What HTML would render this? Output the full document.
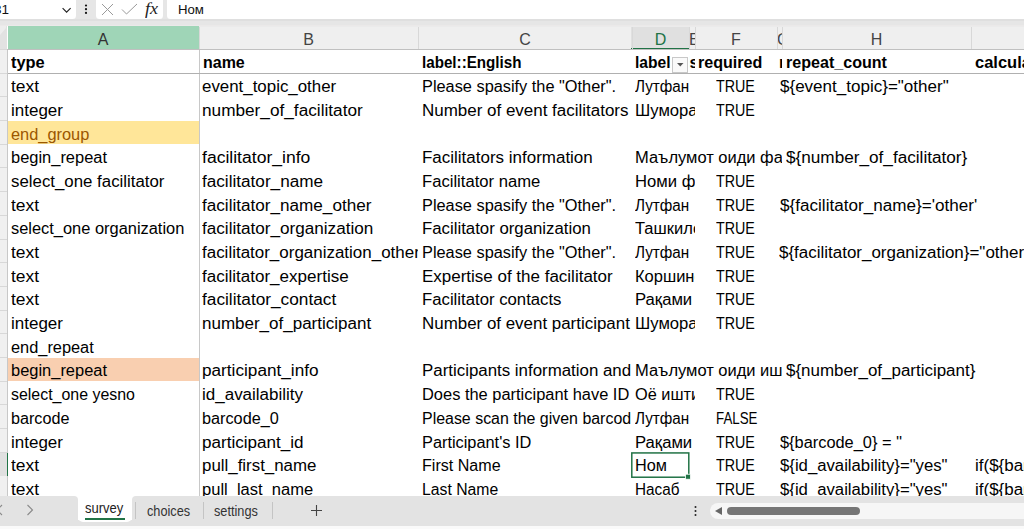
<!DOCTYPE html>
<html><head><meta charset="utf-8"><style>
*{margin:0;padding:0;box-sizing:border-box}
html,body{width:1024px;height:529px;overflow:hidden;background:#fff;position:relative;font-family:"Liberation Sans",sans-serif}
.a{position:absolute}
.t{position:absolute;white-space:pre;font-size:16px;line-height:20px;color:#000;transform-origin:0 0}
.clip{position:absolute;overflow:hidden}
</style></head><body>

<div class="a" style="left:0;top:0;width:1024px;height:26px;background:#e6e6e6"></div>
<div class="a" style="left:-10px;top:-6px;width:86px;height:25px;background:#fff;border-radius:3.5px"></div>
<div class="a" style="left:96px;top:-6px;width:67px;height:25px;background:#fff;border-radius:3.5px"></div>
<div class="a" style="left:167px;top:-6px;width:870px;height:25px;background:#fff;border-radius:3.5px"></div>
<div class="a" style="left:0;top:19px;width:1024px;height:2px;background:#dfdfdf"></div>
<div class="a" style="left:0;top:25px;width:1024px;height:1px;background:#ebe9e9"></div>
<div class="t" style="left:-6px;top:1px;font-size:13.5px;line-height:17px;color:#111">31</div>
<svg class="a" style="left:61px;top:6px" width="12" height="8" viewBox="0 0 12 8"><path d="M1.6 2.1 L5.6 6.1 L9.6 2.1" fill="none" stroke="#222" stroke-width="1.15"/></svg>
<svg class="a" style="left:83px;top:3px" width="6" height="13" viewBox="0 0 6 13"><circle cx="3" cy="2.5" r="1.1" fill="#111"/><circle cx="3" cy="6.2" r="1.1" fill="#111"/><circle cx="3" cy="9.9" r="1.1" fill="#111"/></svg>
<svg class="a" style="left:101px;top:3px" width="13" height="13" viewBox="0 0 13 13"><path d="M1 1 L12 12 M12 1 L1 12" stroke="#9a9a9a" stroke-width="1"/></svg>
<svg class="a" style="left:121px;top:3px" width="17" height="12" viewBox="0 0 17 12"><path d="M1 6.5 L5.5 11 L16 1" fill="none" stroke="#9a9a9a" stroke-width="1"/></svg>
<div class="t" style="left:145px;top:0px;font-family:'Liberation Serif',serif;font-style:italic;font-size:16.5px;line-height:18px;color:#222;transform:scaleX(1.1)">fx</div>
<div class="t" style="left:178px;top:2px;font-size:12px;line-height:17px;color:#111;transform:scaleX(1.1)">Ном</div>
<div class="a" style="left:0;top:26px;width:1024px;height:23px;background:#efefef"></div>
<div class="a" style="left:0;top:26px;width:1024px;height:1px;background:#ebebeb"></div>
<div class="a" style="left:0;top:49px;width:1024px;height:1px;background:#c0c0c0"></div>
<div class="a" style="left:0;top:26px;width:7px;height:23px;background:#e2e2e2"></div>
<svg class="a" style="left:0;top:26px" width="7" height="23"><path d="M0 0 L6 0 L6 2 L0 9 Z" fill="#ededed"/></svg>
<div class="a" style="left:7px;top:26px;width:1px;height:23px;background:#fff"></div>
<div class="a" style="left:8px;top:26px;width:191px;height:23px;background:#9fd5b7"></div>
<div class="a" style="left:631px;top:27px;width:58px;height:22px;background:#e0e0e0"></div>
<div class="a" style="left:631px;top:47.5px;width:58px;height:1.5px;background:#217346"></div>
<div class="a" style="left:199px;top:27px;width:1px;height:22px;background:#d8d8d8"></div>
<div class="a" style="left:418px;top:27px;width:1px;height:22px;background:#d8d8d8"></div>
<div class="a" style="left:632px;top:27px;width:1px;height:22px;background:#d8d8d8"></div>
<div class="a" style="left:689px;top:27px;width:1px;height:22px;background:#d8d8d8"></div>
<div class="a" style="left:695px;top:27px;width:1px;height:22px;background:#d8d8d8"></div>
<div class="a" style="left:777px;top:27px;width:1px;height:22px;background:#d8d8d8"></div>
<div class="a" style="left:782px;top:27px;width:1px;height:22px;background:#d8d8d8"></div>
<div class="a" style="left:971px;top:27px;width:1px;height:22px;background:#d8d8d8"></div>
<div class="clip" style="left:8px;top:26px;width:191px;height:23px"><div class="t" style="left:65.0px;width:60px;text-align:center;top:3.7px;font-size:16px;line-height:20px;color:#333">A</div></div>
<div class="clip" style="left:200px;top:26px;width:218px;height:23px"><div class="t" style="left:78.5px;width:60px;text-align:center;top:3.7px;font-size:16px;line-height:20px;color:#444">B</div></div>
<div class="clip" style="left:419px;top:26px;width:213px;height:23px"><div class="t" style="left:76.0px;width:60px;text-align:center;top:3.7px;font-size:16px;line-height:20px;color:#444">C</div></div>
<div class="clip" style="left:633px;top:26px;width:56px;height:23px"><div class="t" style="left:-2.5px;width:60px;text-align:center;top:3.7px;font-size:16px;line-height:20px;color:#217346">D</div></div>
<div class="clip" style="left:690px;top:26px;width:5px;height:23px"><div class="t" style="left:-1px;top:3.7px;font-size:16px;line-height:20px;color:#444">E</div></div>
<div class="clip" style="left:696px;top:26px;width:81px;height:23px"><div class="t" style="left:10.0px;width:60px;text-align:center;top:3.7px;font-size:16px;line-height:20px;color:#444">F</div></div>
<div class="clip" style="left:778px;top:26px;width:4px;height:23px"><div class="t" style="left:-1px;top:3.7px;font-size:16px;line-height:20px;color:#444">G</div></div>
<div class="clip" style="left:783px;top:26px;width:188px;height:23px"><div class="t" style="left:63.5px;width:60px;text-align:center;top:3.7px;font-size:16px;line-height:20px;color:#444">H</div></div>
<div class="clip" style="left:972px;top:26px;width:199px;height:23px"><div class="t" style="left:69.0px;width:60px;text-align:center;top:3.7px;font-size:16px;line-height:20px;color:#444">I</div></div>
<div class="a" style="left:0;top:50px;width:7px;height:446px;background:#f0f0f0"></div>
<div class="a" style="left:7px;top:50px;width:1px;height:446px;background:#c8c8c8"></div>
<div class="a" style="left:0;top:49.00px;width:7px;height:1px;background:#d8d8d8"></div>
<div class="a" style="left:0;top:72.69px;width:7px;height:1px;background:#d8d8d8"></div>
<div class="a" style="left:0;top:96.38px;width:7px;height:1px;background:#d8d8d8"></div>
<div class="a" style="left:0;top:120.07px;width:7px;height:1px;background:#d8d8d8"></div>
<div class="a" style="left:0;top:143.76px;width:7px;height:1px;background:#d8d8d8"></div>
<div class="a" style="left:0;top:167.45px;width:7px;height:1px;background:#d8d8d8"></div>
<div class="a" style="left:0;top:191.14px;width:7px;height:1px;background:#d8d8d8"></div>
<div class="a" style="left:0;top:214.83px;width:7px;height:1px;background:#d8d8d8"></div>
<div class="a" style="left:0;top:238.52px;width:7px;height:1px;background:#d8d8d8"></div>
<div class="a" style="left:0;top:262.21px;width:7px;height:1px;background:#d8d8d8"></div>
<div class="a" style="left:0;top:285.90px;width:7px;height:1px;background:#d8d8d8"></div>
<div class="a" style="left:0;top:309.59px;width:7px;height:1px;background:#d8d8d8"></div>
<div class="a" style="left:0;top:333.28px;width:7px;height:1px;background:#d8d8d8"></div>
<div class="a" style="left:0;top:356.97px;width:7px;height:1px;background:#d8d8d8"></div>
<div class="a" style="left:0;top:380.66px;width:7px;height:1px;background:#d8d8d8"></div>
<div class="a" style="left:0;top:404.35px;width:7px;height:1px;background:#d8d8d8"></div>
<div class="a" style="left:0;top:428.04px;width:7px;height:1px;background:#d8d8d8"></div>
<div class="a" style="left:0;top:451.73px;width:7px;height:1px;background:#d8d8d8"></div>
<div class="a" style="left:0;top:475.42px;width:7px;height:1px;background:#d8d8d8"></div>
<div class="a" style="left:0;top:499.11px;width:7px;height:1px;background:#d8d8d8"></div>
<div class="a" style="left:0;top:452.73px;width:7px;height:23.69px;background:#e0e0e0"></div>
<div class="a" style="left:7px;top:452.73px;width:1px;height:23.69px;background:#217346"></div>
<div class="a" style="left:8px;top:121.07px;width:191px;height:22.89px;background:#ffe699"></div>
<div class="a" style="left:8px;top:357.97px;width:191px;height:23.09px;background:#f9cfb0"></div>
<div class="a" style="left:199px;top:50px;width:1px;height:446px;background:#c8c8c8"></div>
<div class="a" style="left:8px;top:73px;width:1016px;height:1px;background:#b0b0b0"></div>
<div class="clip" style="left:8px;top:50.00px;width:191px;height:25.69px"><div class="t" style="left:2.70px;top:2.50px;font-weight:bold;color:#000;transform:scaleX(1.0243)">type</div></div>
<div class="clip" style="left:200px;top:50.00px;width:218px;height:25.69px"><div class="t" style="left:2.50px;top:2.50px;font-weight:bold;color:#000;transform:scaleX(0.9988)">name</div></div>
<div class="clip" style="left:418px;top:50.00px;width:214px;height:25.69px"><div class="t" style="left:3.50px;top:2.50px;font-weight:bold;color:#000;transform:scaleX(0.9485)">label::English</div></div>
<div class="clip" style="left:632px;top:50.00px;width:40px;height:25.69px"><div class="t" style="left:2.80px;top:2.50px;font-weight:bold;color:#000;transform:scaleX(0.9753)">label</div></div>
<div class="clip" style="left:695px;top:50.00px;width:82px;height:25.69px"><div class="t" style="left:2.80px;top:2.50px;font-weight:bold;color:#000;transform:scaleX(1.0047)">required</div></div>
<div class="clip" style="left:689px;top:50.00px;width:6px;height:25.69px"><div class="t" style="left:-37.00px;top:2.50px;font-weight:bold;color:#000;transform:scaleX(1.0300)">labels</div></div>
<div class="clip" style="left:777px;top:50.00px;width:5px;height:25.69px"><div class="t" style="left:2.00px;top:2.50px;font-weight:bold;color:#000;transform:scaleX(1.0300)">relevant</div></div>
<div class="clip" style="left:782px;top:50.00px;width:189px;height:25.69px"><div class="t" style="left:3.90px;top:2.50px;font-weight:bold;color:#000;transform:scaleX(1.0050)">repeat_count</div></div>
<div class="clip" style="left:971px;top:50.00px;width:53px;height:25.69px"><div class="t" style="left:4.00px;top:2.50px;font-weight:bold;color:#000;transform:scaleX(1.0300)">calcula</div></div>
<div class="clip" style="left:8px;top:73.69px;width:191px;height:25.69px"><div class="t" style="left:3.10px;top:3.50px;color:#000;transform:scaleX(1.0891)">text</div></div>
<div class="clip" style="left:200px;top:73.69px;width:218px;height:25.69px"><div class="t" style="left:2.40px;top:3.50px;color:#000;transform:scaleX(1.0550)">event_topic_other</div></div>
<div class="clip" style="left:418px;top:73.69px;width:214px;height:25.69px"><div class="t" style="left:3.90px;top:3.50px;color:#000;transform:scaleX(1.0205)">Please spasify the &quot;Other&quot;.</div></div>
<div class="clip" style="left:632px;top:73.69px;width:63px;height:25.69px"><div class="t" style="left:2.50px;top:3.50px;color:#000;transform:scaleX(0.9534)">Лутфан</div></div>
<div class="clip" style="left:695px;top:73.69px;width:82px;height:25.69px"><div class="t" style="left:21.10px;top:3.50px;color:#000;transform:scaleX(0.8922)">TRUE</div></div>
<div class="clip" style="left:777px;top:73.69px;width:247px;height:25.69px"><div class="t" style="left:2.70px;top:3.50px;color:#000;transform:scaleX(1.0637)">${event_topic}=&quot;other&quot;</div></div>
<div class="clip" style="left:8px;top:97.38px;width:191px;height:25.69px"><div class="t" style="left:3.10px;top:3.50px;color:#000;transform:scaleX(1.0613)">integer</div></div>
<div class="clip" style="left:200px;top:97.38px;width:218px;height:25.69px"><div class="t" style="left:2.40px;top:3.50px;color:#000;transform:scaleX(1.0756)">number_of_facilitator</div></div>
<div class="clip" style="left:418px;top:97.38px;width:214px;height:25.69px"><div class="t" style="left:3.90px;top:3.50px;color:#000;transform:scaleX(1.0601)">Number of event facilitators</div></div>
<div class="clip" style="left:632px;top:97.38px;width:63px;height:25.69px"><div class="t" style="left:3.40px;top:3.50px;color:#000;transform:scaleX(1.0400)">Шумора</div></div>
<div class="clip" style="left:695px;top:97.38px;width:82px;height:25.69px"><div class="t" style="left:21.10px;top:3.50px;color:#000;transform:scaleX(0.8922)">TRUE</div></div>
<div class="clip" style="left:8px;top:121.07px;width:191px;height:25.69px"><div class="t" style="left:3.10px;top:3.50px;color:#9c5700;transform:scaleX(1.0235)">end_group</div></div>
<div class="clip" style="left:8px;top:144.76px;width:191px;height:25.69px"><div class="t" style="left:3.10px;top:3.50px;color:#000;transform:scaleX(1.0278)">begin_repeat</div></div>
<div class="clip" style="left:200px;top:144.76px;width:218px;height:25.69px"><div class="t" style="left:2.40px;top:3.50px;color:#000;transform:scaleX(1.0973)">facilitator_info</div></div>
<div class="clip" style="left:418px;top:144.76px;width:214px;height:25.69px"><div class="t" style="left:3.90px;top:3.50px;color:#000;transform:scaleX(1.0609)">Facilitators information</div></div>
<div class="clip" style="left:632px;top:144.76px;width:150px;height:25.69px"><div class="t" style="left:3.40px;top:3.50px;color:#000;transform:scaleX(1.0300)">Маълумот оиди фасилитатор</div></div>
<div class="clip" style="left:782px;top:144.76px;width:242px;height:25.69px"><div class="t" style="left:3.70px;top:3.50px;color:#000;transform:scaleX(1.0728)">${number_of_facilitator}</div></div>
<div class="clip" style="left:8px;top:168.45px;width:191px;height:25.69px"><div class="t" style="left:3.10px;top:3.50px;color:#000;transform:scaleX(1.0521)">select_one facilitator</div></div>
<div class="clip" style="left:200px;top:168.45px;width:218px;height:25.69px"><div class="t" style="left:2.40px;top:3.50px;color:#000;transform:scaleX(1.0717)">facilitator_name</div></div>
<div class="clip" style="left:418px;top:168.45px;width:214px;height:25.69px"><div class="t" style="left:3.90px;top:3.50px;color:#000;transform:scaleX(1.0395)">Facilitator name</div></div>
<div class="clip" style="left:632px;top:168.45px;width:63px;height:25.69px"><div class="t" style="left:3.40px;top:3.50px;color:#000;transform:scaleX(1.0400)">Номи фасилитатор</div></div>
<div class="clip" style="left:695px;top:168.45px;width:82px;height:25.69px"><div class="t" style="left:21.10px;top:3.50px;color:#000;transform:scaleX(0.8922)">TRUE</div></div>
<div class="clip" style="left:8px;top:192.14px;width:191px;height:25.69px"><div class="t" style="left:3.10px;top:3.50px;color:#000;transform:scaleX(1.0891)">text</div></div>
<div class="clip" style="left:200px;top:192.14px;width:218px;height:25.69px"><div class="t" style="left:2.40px;top:3.50px;color:#000;transform:scaleX(1.0701)">facilitator_name_other</div></div>
<div class="clip" style="left:418px;top:192.14px;width:214px;height:25.69px"><div class="t" style="left:3.90px;top:3.50px;color:#000;transform:scaleX(1.0205)">Please spasify the &quot;Other&quot;.</div></div>
<div class="clip" style="left:632px;top:192.14px;width:63px;height:25.69px"><div class="t" style="left:2.50px;top:3.50px;color:#000;transform:scaleX(0.9534)">Лутфан</div></div>
<div class="clip" style="left:695px;top:192.14px;width:82px;height:25.69px"><div class="t" style="left:21.10px;top:3.50px;color:#000;transform:scaleX(0.8922)">TRUE</div></div>
<div class="clip" style="left:777px;top:192.14px;width:247px;height:25.69px"><div class="t" style="left:2.80px;top:3.50px;color:#000;transform:scaleX(1.0688)">${facilitator_name}=&#x27;other&#x27;</div></div>
<div class="clip" style="left:8px;top:215.83px;width:191px;height:25.69px"><div class="t" style="left:3.10px;top:3.50px;color:#000;transform:scaleX(1.0254)">select_one organization</div></div>
<div class="clip" style="left:200px;top:215.83px;width:218px;height:25.69px"><div class="t" style="left:2.40px;top:3.50px;color:#000;transform:scaleX(1.0700)">facilitator_organization</div></div>
<div class="clip" style="left:418px;top:215.83px;width:214px;height:25.69px"><div class="t" style="left:3.90px;top:3.50px;color:#000;transform:scaleX(1.0491)">Facilitator organization</div></div>
<div class="clip" style="left:632px;top:215.83px;width:63px;height:25.69px"><div class="t" style="left:3.40px;top:3.50px;color:#000;transform:scaleX(1.0300)">Ташкилот</div></div>
<div class="clip" style="left:695px;top:215.83px;width:82px;height:25.69px"><div class="t" style="left:21.10px;top:3.50px;color:#000;transform:scaleX(0.8922)">TRUE</div></div>
<div class="clip" style="left:8px;top:239.52px;width:191px;height:25.69px"><div class="t" style="left:3.10px;top:3.50px;color:#000;transform:scaleX(1.0891)">text</div></div>
<div class="clip" style="left:200px;top:239.52px;width:218px;height:25.69px"><div class="t" style="left:2.00px;top:3.50px;color:#000;transform:scaleX(1.0600)">facilitator_organization_other</div></div>
<div class="clip" style="left:418px;top:239.52px;width:214px;height:25.69px"><div class="t" style="left:3.90px;top:3.50px;color:#000;transform:scaleX(1.0205)">Please spasify the &quot;Other&quot;.</div></div>
<div class="clip" style="left:632px;top:239.52px;width:63px;height:25.69px"><div class="t" style="left:2.50px;top:3.50px;color:#000;transform:scaleX(0.9534)">Лутфан</div></div>
<div class="clip" style="left:695px;top:239.52px;width:82px;height:25.69px"><div class="t" style="left:21.10px;top:3.50px;color:#000;transform:scaleX(0.8922)">TRUE</div></div>
<div class="clip" style="left:777px;top:239.52px;width:247px;height:25.69px"><div class="t" style="left:2.00px;top:3.50px;color:#000;transform:scaleX(1.0600)">${facilitator_organization}=&quot;other&quot;</div></div>
<div class="clip" style="left:8px;top:263.21px;width:191px;height:25.69px"><div class="t" style="left:3.10px;top:3.50px;color:#000;transform:scaleX(1.0891)">text</div></div>
<div class="clip" style="left:200px;top:263.21px;width:218px;height:25.69px"><div class="t" style="left:2.40px;top:3.50px;color:#000;transform:scaleX(1.0639)">facilitator_expertise</div></div>
<div class="clip" style="left:418px;top:263.21px;width:214px;height:25.69px"><div class="t" style="left:3.90px;top:3.50px;color:#000;transform:scaleX(1.0612)">Expertise of the facilitator</div></div>
<div class="clip" style="left:632px;top:263.21px;width:63px;height:25.69px"><div class="t" style="left:3.40px;top:3.50px;color:#000;transform:scaleX(1.0300)">Коршинос</div></div>
<div class="clip" style="left:695px;top:263.21px;width:82px;height:25.69px"><div class="t" style="left:21.10px;top:3.50px;color:#000;transform:scaleX(0.8922)">TRUE</div></div>
<div class="clip" style="left:8px;top:286.90px;width:191px;height:25.69px"><div class="t" style="left:3.10px;top:3.50px;color:#000;transform:scaleX(1.0891)">text</div></div>
<div class="clip" style="left:200px;top:286.90px;width:218px;height:25.69px"><div class="t" style="left:2.40px;top:3.50px;color:#000;transform:scaleX(1.0779)">facilitator_contact</div></div>
<div class="clip" style="left:418px;top:286.90px;width:214px;height:25.69px"><div class="t" style="left:3.90px;top:3.50px;color:#000;transform:scaleX(1.0457)">Facilitator contacts</div></div>
<div class="clip" style="left:632px;top:286.90px;width:63px;height:25.69px"><div class="t" style="left:3.00px;top:3.50px;color:#000;transform:scaleX(1.0419)">Рақами</div></div>
<div class="clip" style="left:695px;top:286.90px;width:82px;height:25.69px"><div class="t" style="left:21.10px;top:3.50px;color:#000;transform:scaleX(0.8922)">TRUE</div></div>
<div class="clip" style="left:8px;top:310.59px;width:191px;height:25.69px"><div class="t" style="left:3.10px;top:3.50px;color:#000;transform:scaleX(1.0613)">integer</div></div>
<div class="clip" style="left:200px;top:310.59px;width:218px;height:25.69px"><div class="t" style="left:2.40px;top:3.50px;color:#000;transform:scaleX(1.0622)">number_of_participant</div></div>
<div class="clip" style="left:418px;top:310.59px;width:214px;height:25.69px"><div class="t" style="left:3.90px;top:3.50px;color:#000;transform:scaleX(1.0575)">Number of event participant</div></div>
<div class="clip" style="left:632px;top:310.59px;width:63px;height:25.69px"><div class="t" style="left:3.40px;top:3.50px;color:#000;transform:scaleX(1.0400)">Шумораи</div></div>
<div class="clip" style="left:695px;top:310.59px;width:82px;height:25.69px"><div class="t" style="left:21.10px;top:3.50px;color:#000;transform:scaleX(0.8922)">TRUE</div></div>
<div class="clip" style="left:8px;top:334.28px;width:191px;height:25.69px"><div class="t" style="left:3.10px;top:3.50px;color:#000;transform:scaleX(1.0222)">end_repeat</div></div>
<div class="clip" style="left:8px;top:357.97px;width:191px;height:25.69px"><div class="t" style="left:3.10px;top:3.50px;color:#000;transform:scaleX(1.0278)">begin_repeat</div></div>
<div class="clip" style="left:200px;top:357.97px;width:218px;height:25.69px"><div class="t" style="left:2.40px;top:3.50px;color:#000;transform:scaleX(1.0737)">participant_info</div></div>
<div class="clip" style="left:418px;top:357.97px;width:214px;height:25.69px"><div class="t" style="left:3.90px;top:3.50px;color:#000;transform:scaleX(1.0545)">Participants information and</div></div>
<div class="clip" style="left:632px;top:357.97px;width:150px;height:25.69px"><div class="t" style="left:3.40px;top:3.50px;color:#000;transform:scaleX(1.0300)">Маълумот оиди иштирокчиён</div></div>
<div class="clip" style="left:782px;top:357.97px;width:242px;height:25.69px"><div class="t" style="left:3.70px;top:3.50px;color:#000;transform:scaleX(1.0587)">${number_of_participant}</div></div>
<div class="clip" style="left:8px;top:381.66px;width:191px;height:25.69px"><div class="t" style="left:3.10px;top:3.50px;color:#000;transform:scaleX(0.9952)">select_one yesno</div></div>
<div class="clip" style="left:200px;top:381.66px;width:218px;height:25.69px"><div class="t" style="left:2.40px;top:3.50px;color:#000;transform:scaleX(1.0620)">id_availability</div></div>
<div class="clip" style="left:418px;top:381.66px;width:214px;height:25.69px"><div class="t" style="left:3.90px;top:3.50px;color:#000;transform:scaleX(1.0267)">Does the participant have ID</div></div>
<div class="clip" style="left:632px;top:381.66px;width:63px;height:25.69px"><div class="t" style="left:3.40px;top:3.50px;color:#000;transform:scaleX(1.0200)">Оё иштирокчи</div></div>
<div class="clip" style="left:695px;top:381.66px;width:82px;height:25.69px"><div class="t" style="left:21.10px;top:3.50px;color:#000;transform:scaleX(0.8922)">TRUE</div></div>
<div class="clip" style="left:8px;top:405.35px;width:191px;height:25.69px"><div class="t" style="left:3.10px;top:3.50px;color:#000;transform:scaleX(1.0104)">barcode</div></div>
<div class="clip" style="left:200px;top:405.35px;width:218px;height:25.69px"><div class="t" style="left:2.40px;top:3.50px;color:#000;transform:scaleX(1.0159)">barcode_0</div></div>
<div class="clip" style="left:418px;top:405.35px;width:214px;height:25.69px"><div class="t" style="left:3.90px;top:3.50px;color:#000;transform:scaleX(0.9962)">Please scan the given barcod</div></div>
<div class="clip" style="left:632px;top:405.35px;width:63px;height:25.69px"><div class="t" style="left:2.50px;top:3.50px;color:#000;transform:scaleX(0.9534)">Лутфан</div></div>
<div class="clip" style="left:695px;top:405.35px;width:82px;height:25.69px"><div class="t" style="left:20.50px;top:3.50px;color:#000;transform:scaleX(0.8313)">FALSE</div></div>
<div class="clip" style="left:8px;top:429.04px;width:191px;height:25.69px"><div class="t" style="left:3.10px;top:3.50px;color:#000;transform:scaleX(1.0613)">integer</div></div>
<div class="clip" style="left:200px;top:429.04px;width:218px;height:25.69px"><div class="t" style="left:2.40px;top:3.50px;color:#000;transform:scaleX(1.0672)">participant_id</div></div>
<div class="clip" style="left:418px;top:429.04px;width:214px;height:25.69px"><div class="t" style="left:3.90px;top:3.50px;color:#000;transform:scaleX(1.0205)">Participant&#x27;s ID</div></div>
<div class="clip" style="left:632px;top:429.04px;width:63px;height:25.69px"><div class="t" style="left:3.00px;top:3.50px;color:#000;transform:scaleX(1.0419)">Рақами</div></div>
<div class="clip" style="left:695px;top:429.04px;width:82px;height:25.69px"><div class="t" style="left:21.10px;top:3.50px;color:#000;transform:scaleX(0.8922)">TRUE</div></div>
<div class="clip" style="left:777px;top:429.04px;width:247px;height:25.69px"><div class="t" style="left:2.80px;top:3.50px;color:#000;transform:scaleX(1.0226)">${barcode_0} = &#x27;&#x27;</div></div>
<div class="clip" style="left:8px;top:452.73px;width:191px;height:25.69px"><div class="t" style="left:3.10px;top:3.50px;color:#000;transform:scaleX(1.0891)">text</div></div>
<div class="clip" style="left:200px;top:452.73px;width:218px;height:25.69px"><div class="t" style="left:2.40px;top:3.50px;color:#000;transform:scaleX(1.0544)">pull_first_name</div></div>
<div class="clip" style="left:418px;top:452.73px;width:214px;height:25.69px"><div class="t" style="left:3.90px;top:3.50px;color:#000;transform:scaleX(1.0051)">First Name</div></div>
<div class="clip" style="left:632px;top:452.73px;width:63px;height:25.69px"><div class="t" style="left:3.00px;top:3.50px;color:#000;transform:scaleX(1.0159)">Ном</div></div>
<div class="clip" style="left:695px;top:452.73px;width:82px;height:25.69px"><div class="t" style="left:21.10px;top:3.50px;color:#000;transform:scaleX(0.8922)">TRUE</div></div>
<div class="clip" style="left:777px;top:452.73px;width:194px;height:25.69px"><div class="t" style="left:2.80px;top:3.50px;color:#000;transform:scaleX(1.0449)">${id_availability}=&quot;yes&quot;</div></div>
<div class="clip" style="left:971px;top:452.73px;width:53px;height:25.69px"><div class="t" style="left:4.00px;top:3.50px;color:#000;transform:scaleX(1.0600)">if(${barcode_0}</div></div>
<div class="clip" style="left:8px;top:476.42px;width:191px;height:25.69px"><div class="t" style="left:3.10px;top:3.50px;color:#000;transform:scaleX(1.0891)">text</div></div>
<div class="clip" style="left:200px;top:476.42px;width:218px;height:25.69px"><div class="t" style="left:2.40px;top:3.50px;color:#000;transform:scaleX(1.0335)">pull_last_name</div></div>
<div class="clip" style="left:418px;top:476.42px;width:214px;height:25.69px"><div class="t" style="left:3.90px;top:3.50px;color:#000;transform:scaleX(0.9845)">Last Name</div></div>
<div class="clip" style="left:632px;top:476.42px;width:63px;height:25.69px"><div class="t" style="left:3.00px;top:3.50px;color:#000;transform:scaleX(0.9570)">Насаб</div></div>
<div class="clip" style="left:695px;top:476.42px;width:82px;height:25.69px"><div class="t" style="left:21.10px;top:3.50px;color:#000;transform:scaleX(0.8922)">TRUE</div></div>
<div class="clip" style="left:777px;top:476.42px;width:194px;height:25.69px"><div class="t" style="left:2.80px;top:3.50px;color:#000;transform:scaleX(1.0449)">${id_availability}=&quot;yes&quot;</div></div>
<div class="clip" style="left:971px;top:476.42px;width:53px;height:25.69px"><div class="t" style="left:4.00px;top:3.50px;color:#000;transform:scaleX(1.0600)">if(${barcode_0}</div></div>
<div class="a" style="left:672px;top:57px;width:16px;height:16px;background:#fafafa;border:1px solid #c8c8c8"></div>
<svg class="a" style="left:677px;top:63px" width="7" height="4"><path d="M0 0 L6.5 0 L3.25 3.5 Z" fill="#555"/></svg>
<svg class="a" style="left:0;top:0" width="1024" height="529"><rect x="631.8" y="452.93" width="57" height="24.29" fill="none" stroke="#217346" stroke-width="1.5"/><rect x="685.5" y="474.22" width="5" height="5" fill="#217346" stroke="#fff" stroke-width="0.8"/></svg>
<div class="a" style="left:0;top:496px;width:1024px;height:29.5px;background:#fff"></div>
<div class="a" style="left:0;top:496px;width:78px;height:29.5px;background:#e3e3e3;border-radius:0 4px 0 0"></div>
<div class="a" style="left:132px;top:496px;width:900px;height:29.5px;background:#e3e3e3;border-radius:4px 0 0 0"></div>
<div class="a" style="left:70px;top:520px;width:70px;height:5.5px;background:#e3e3e3"></div>
<div class="a" style="left:0;top:525.5px;width:1024px;height:4px;background:#fafafa"></div>
<svg class="a" style="left:-4px;top:504px" width="8" height="12"><path d="M6 1 L1 6 L6 11" fill="none" stroke="#8a8a8a" stroke-width="1.1"/></svg>
<svg class="a" style="left:26px;top:504px" width="8" height="12"><path d="M1.5 1 L6.5 6 L1.5 11" fill="none" stroke="#8a8a8a" stroke-width="1.1"/></svg>
<div class="a" style="left:78px;top:496px;width:54px;height:26px;background:#fff;border-radius:0 0 5px 5px"></div>
<div class="t" style="left:85px;top:499px;font-size:14px;line-height:18px;color:#222;transform:scaleX(0.93)">survey</div>
<div class="a" style="left:85px;top:518px;width:40px;height:2px;background:#217346"></div>
<div class="a" style="left:135px;top:502px;width:1px;height:17px;background:#c4c4c4"></div>
<div class="t" style="left:147px;top:502px;font-size:14px;line-height:18px;color:#333;transform:scaleX(0.91)">choices</div>
<div class="a" style="left:203px;top:502px;width:1px;height:17px;background:#c4c4c4"></div>
<div class="t" style="left:214px;top:502px;font-size:14px;line-height:18px;color:#333;transform:scaleX(0.91)">settings</div>
<div class="a" style="left:272px;top:502px;width:1px;height:17px;background:#c4c4c4"></div>
<svg class="a" style="left:311px;top:505px" width="11" height="11"><path d="M5.5 0 V11 M0 5.5 H11" stroke="#444" stroke-width="1.1"/></svg>
<svg class="a" style="left:693px;top:505px" width="5" height="12"><circle cx="2.5" cy="2" r="1" fill="#222"/><circle cx="2.5" cy="6" r="1" fill="#222"/><circle cx="2.5" cy="10" r="1" fill="#222"/></svg>
<div class="a" style="left:710px;top:502.5px;width:330px;height:16px;background:#f6f6f6;border-radius:8px"></div>
<svg class="a" style="left:714px;top:505.5px" width="9" height="10"><path d="M1 5 L8 1 L8 9 Z" fill="#666"/></svg>
<div class="a" style="left:726.5px;top:506.5px;width:133.5px;height:8px;background:#757575;border-radius:4px"></div>
</body></html>
